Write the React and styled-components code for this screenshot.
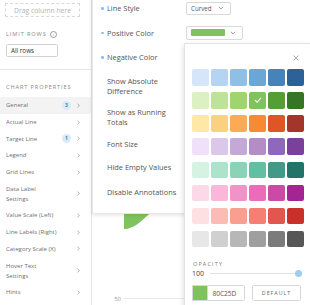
import styled, { createGlobalStyle } from 'styled-components';

const GlobalStyle = createGlobalStyle`
  html, body {
    margin: 0;
    padding: 0;
    overflow: hidden;
    background: #fff;
  }
  body {
    font-family: "Open Sans", "Liberation Sans", sans-serif;
    color: #555;
  }
`;

const Page = styled.div`
  display: flex;
  width: 310px;
  height: 305px;
  overflow: hidden;
`;

const Sidebar = styled.div`
  width: 92px;
  flex-shrink: 0;
  border-right: 1px solid #e4e4e4;
  display: flex;
  flex-direction: column;
  padding-top: 3px;
  box-sizing: border-box;
`;

const DropZone = styled.div`
  margin: 0 11px 0 5px;
  height: 14px;
  box-sizing: border-box;
  border: 1px dashed #d9d9d9;
  border-radius: 1px;
  display: flex;
  align-items: center;
  justify-content: center;
  font-size: 6.8px;
  color: #b4b4b4;
`;

const SectionLabel = styled.div`
  display: flex;
  align-items: center;
  gap: 3px;
  margin: ${p => p.$top}px 0 0 6px;
  height: 8px;
  font-size: 5.6px;
  letter-spacing: 0.9px;
  color: #888;
`;

const InfoIcon = styled.span`
  width: 5px;
  height: 5px;
  border: 0.8px solid #999;
  border-radius: 50%;
  font-size: 4px;
  line-height: 5px;
  text-align: center;
  letter-spacing: 0;
  color: #888;
`;

const TextInput = styled.div`
  margin: 6px 0 0 6px;
  width: 52px;
  height: 13px;
  box-sizing: border-box;
  border: 1px solid #d2d2d2;
  border-radius: 1.5px;
  padding-left: 4px;
  display: flex;
  align-items: center;
  font-size: 6.3px;
  color: #333;
`;

const Divider = styled.div`
  margin-top: 12px;
  height: 1px;
  background: #e6e6e6;
`;

const NavList = styled.div`
  margin-top: 6px;
  display: flex;
  flex-direction: column;
`;

const NavRow = styled.div`
  display: flex;
  align-items: center;
  padding: 3.35px 10px 3.35px 6px;
  background: ${p => (p.$active ? '#f3f3f3' : 'transparent')};
  font-size: 6px;
  line-height: 10px;
  color: #707070;
`;

const NavText = styled.span`
  margin-right: auto;
  white-space: nowrap;
`;

const Badge = styled.span`
  width: 9px;
  height: 9px;
  border-radius: 50%;
  background: #dbeaf7;
  color: #3d83c6;
  font-size: 5px;
  font-weight: 700;
  line-height: 9px;
  text-align: center;
  margin-right: 5px;
`;

const Chevron = ({ size = 5, color = '#8a8a8a' }) => (
  <svg width={size} height={size} viewBox="0 0 10 10" fill="none">
    <path d="M3 1.5 L6.8 5 L3 8.5" stroke={color} strokeWidth="1.3" />
  </svg>
);

const ChevronDown = ({ color = '#777' }) => (
  <svg width="6" height="4" viewBox="0 0 10 6" fill="none">
    <path d="M1.5 1 L5 4.5 L8.5 1" stroke={color} strokeWidth="1.3" />
  </svg>
);

const Main = styled.div`
  position: relative;
  flex: 1;
  height: 305px;
`;

const ChartSvg = styled.svg`
  display: block;
  width: 217px;
  height: 305px;
  font-family: "Open Sans", "Liberation Sans", sans-serif;
`;

const Menu = styled.div`
  position: absolute;
  left: 0;
  top: -5px;
  width: 240px;
  background: #fff;
  border: 1px solid #e6e6e6;
  box-shadow: 0 1px 4px rgba(0, 0, 0, 0.12);
  padding-bottom: 8px;
`;

const MenuRow = styled.div`
  display: flex;
  align-items: center;
  height: ${p => p.$h || 24}px;
`;

const MenuLabel = styled.div`
  position: relative;
  width: 75px;
  margin-left: 14px;
  margin-right: 4px;
  font-size: 7.4px;
  line-height: 10px;
  color: #555;
  &::before {
    content: '';
    display: ${p => (p.$bullet ? 'block' : 'none')};
    position: absolute;
    left: -6px;
    top: 4px;
    width: 2.5px;
    height: 2.5px;
    border-radius: 50%;
    background: #8fc0e8;
  }
`;

const Select = styled.div`
  display: flex;
  align-items: center;
  justify-content: space-between;
  box-sizing: border-box;
  width: ${p => p.$w}px;
  height: ${p => p.$h}px;
  border: 1px solid #d9d9d9;
  border-radius: 2px;
  padding: 0 6px 0 4px;
  font-size: 6.2px;
  color: #555;
`;

const ColorChip = styled.span`
  width: 34px;
  height: 7px;
  border-radius: 1px;
  background: #80c25d;
`;

const Popover = styled.div`
  position: absolute;
  left: 92px;
  top: 43px;
  width: 127px;
  box-sizing: border-box;
  padding: 0 9px 10px 7px;
  background: #fff;
  border: 1px solid #e3e3e3;
  box-shadow: -1px 2px 5px rgba(0, 0, 0, 0.12);
`;

const PopHeader = styled.div`
  height: 25px;
  display: flex;
  align-items: center;
  justify-content: flex-end;
  padding-right: 2px;
  padding-top: 3px;
  box-sizing: border-box;
`;

const SwatchGrid = styled.div`
  display: grid;
  grid-template-columns: repeat(6, 17px);
  grid-auto-rows: 16.5px;
  column-gap: 2px;
  row-gap: 6.65px;
`;

const Swatch = styled.div`
  border-radius: 2px;
  background: ${p => p.$color};
  display: flex;
  align-items: center;
  justify-content: center;
`;

const OpacityLabel = styled.div`
  margin-top: 13px;
  font-size: 5.4px;
  letter-spacing: 1.2px;
  line-height: 8px;
  color: #777;
  padding-left: 1px;
`;

const OpacityRow = styled.div`
  display: flex;
  align-items: center;
  height: 10px;
  gap: 6px;
  font-size: 7px;
  color: #444;
`;

const Track = styled.div`
  position: relative;
  flex: 1;
  height: 1px;
  background: #e2e2e2;
  margin-right: 3px;
`;

const Thumb = styled.span`
  position: absolute;
  right: -3.5px;
  top: -3px;
  width: 7px;
  height: 7px;
  border-radius: 50%;
  background: #9fcdf0;
`;

const BottomRow = styled.div`
  display: flex;
  align-items: stretch;
  height: 16px;
  margin-top: 7px;
`;

const HexSwatch = styled.div`
  width: 16px;
  box-sizing: border-box;
  border: 1px solid #d7d7d7;
  border-right: none;
  background: #80c25d;
  border-radius: 1.5px 0 0 1.5px;
`;

const HexInput = styled.div`
  width: 39px;
  box-sizing: border-box;
  border: 1px solid #d7d7d7;
  border-radius: 0 1.5px 1.5px 0;
  display: flex;
  align-items: center;
  padding-left: 4px;
  font-size: 6.6px;
  color: #555;
`;

const DefaultButton = styled.div`
  margin-left: 7px;
  width: 51px;
  box-sizing: border-box;
  border: 1px solid #d7d7d7;
  border-radius: 1.5px;
  display: flex;
  align-items: center;
  justify-content: center;
  font-size: 5.3px;
  letter-spacing: 1px;
  color: #666;
`;

const navItems = [
  { label: ['General'], badge: 3, active: true },
  { label: ['Actual Line'] },
  { label: ['Target Line'], badge: 1 },
  { label: ['Legend'] },
  { label: ['Grid Lines'] },
  { label: ['Data Label', 'Settings'] },
  { label: ['Value Scale (Left)'] },
  { label: ['Line Labels (Right)'] },
  { label: ['Category Scale (X)'] },
  { label: ['Hover Text', 'Settings'] },
  { label: ['Hints'] },
];

const menuRows = [
  { label: 'Line Style', bullet: true, h: 24, control: 'style' },
  { label: 'Positive Color', bullet: true, h: 25, control: 'color' },
  { label: 'Negative Color', bullet: true, h: 24 },
  { label: 'Show Absolute Difference', h: 33 },
  { label: 'Show as Running Totals', h: 30 },
  { label: 'Font Size', h: 23 },
  { label: 'Hide Empty Values', h: 24 },
  { label: 'Disable Annotations', h: 26 },
];

const palette = [
  ['#d6e6fa', '#b5d4f1', '#8fbfe4', '#6aa6d6', '#4583bb', '#2c6297'],
  ['#dcf0c4', '#bde39a', '#9fd56f', '#80c25d', '#559e36', '#357525'],
  ['#fde8a6', '#fbd07e', '#fbab55', '#f88a33', '#e05525', '#a3352a'],
  ['#f1e0f9', '#dac7ea', '#c4a9d8', '#b38cc8', '#8f67bb', '#7b3f9c'],
  ['#d4f3e2', '#ace3cb', '#8ad3b6', '#63bfa1', '#449888', '#237468'],
  ['#fcd9e6', '#f9b7d9', '#f093c9', '#ea6dba', '#cb4aa5', '#a32592'],
  ['#fde0e1', '#fbbcb6', '#f99e90', '#f67f73', '#e1574d', '#c93029'],
  ['#e7e7e7', '#d0d0d0', '#b7b7b7', '#9f9f9f', '#7b7b7b', '#575757'],
];

const selected = '#80c25d';

function MenuControl({ type }) {
  if (type === 'style') {
    return (
      <Select $w={45} $h={13}>
        Curved <ChevronDown />
      </Select>
    );
  }
  if (type === 'color') {
    return (
      <Select $w={57} $h={14}>
        <ColorChip /> <ChevronDown />
      </Select>
    );
  }
  return null;
}

export default function App() {
  return (
    <Page>
      <GlobalStyle />
      <Sidebar>
        <DropZone>Drag column here</DropZone>
        <SectionLabel $top={13}>
          LIMIT ROWS <InfoIcon>i</InfoIcon>
        </SectionLabel>
        <TextInput>All rows</TextInput>
        <Divider />
        <SectionLabel $top={13}>CHART PROPERTIES</SectionLabel>
        <NavList>
          {navItems.map(item => (
            <NavRow key={item.label.join(' ')} $active={item.active}>
              <NavText>
                {item.label.map((line, i) => (
                  <span key={line}>
                    {i > 0 && <br />}
                    {line}
                  </span>
                ))}
              </NavText>
              {item.badge && <Badge>{item.badge}</Badge>}
              <Chevron />
            </NavRow>
          ))}
        </NavList>
      </Sidebar>

      <Main>
        <ChartSvg viewBox="0 0 217 305">
          <line x1="32" y1="211" x2="217" y2="211" stroke="#e8e8e8" strokeWidth="1" />
          <line x1="32" y1="298.5" x2="217" y2="298.5" stroke="#e8e8e8" strokeWidth="1" />
          <path d="M32 150 L32 229 C42 229 50 221 60 211 L80 150 Z" fill="#80c25d" />
          <text x="30" y="213" fontSize="6" fill="#999" textAnchor="end">100</text>
          <text x="29" y="300.5" fontSize="6" fill="#999" textAnchor="end">50</text>
        </ChartSvg>

        <Menu>
          {menuRows.map(row => (
            <MenuRow key={row.label} $h={row.h}>
              <MenuLabel $bullet={row.bullet}>{row.label}</MenuLabel>
              <MenuControl type={row.control} />
            </MenuRow>
          ))}
        </Menu>

        <Popover>
          <PopHeader>
            <svg width="6" height="6" viewBox="0 0 10 10" fill="none">
              <path d="M1 1 L9 9 M9 1 L1 9" stroke="#888" strokeWidth="1.2" />
            </svg>
          </PopHeader>
          <SwatchGrid>
            {palette.flat().map(c => (
              <Swatch key={c} $color={c}>
                {c === selected && (
                  <svg width="8" height="6" viewBox="0 0 10 8" fill="none">
                    <path d="M1 4.2 L3.8 7 L9 1" stroke="#fff" strokeWidth="1.4" />
                  </svg>
                )}
              </Swatch>
            ))}
          </SwatchGrid>
          <OpacityLabel>OPACITY</OpacityLabel>
          <OpacityRow>
            <span>100</span>
            <Track>
              <Thumb />
            </Track>
          </OpacityRow>
          <BottomRow>
            <HexSwatch />
            <HexInput>80C25D</HexInput>
            <DefaultButton>DEFAULT</DefaultButton>
          </BottomRow>
        </Popover>
      </Main>
    </Page>
  );
}
